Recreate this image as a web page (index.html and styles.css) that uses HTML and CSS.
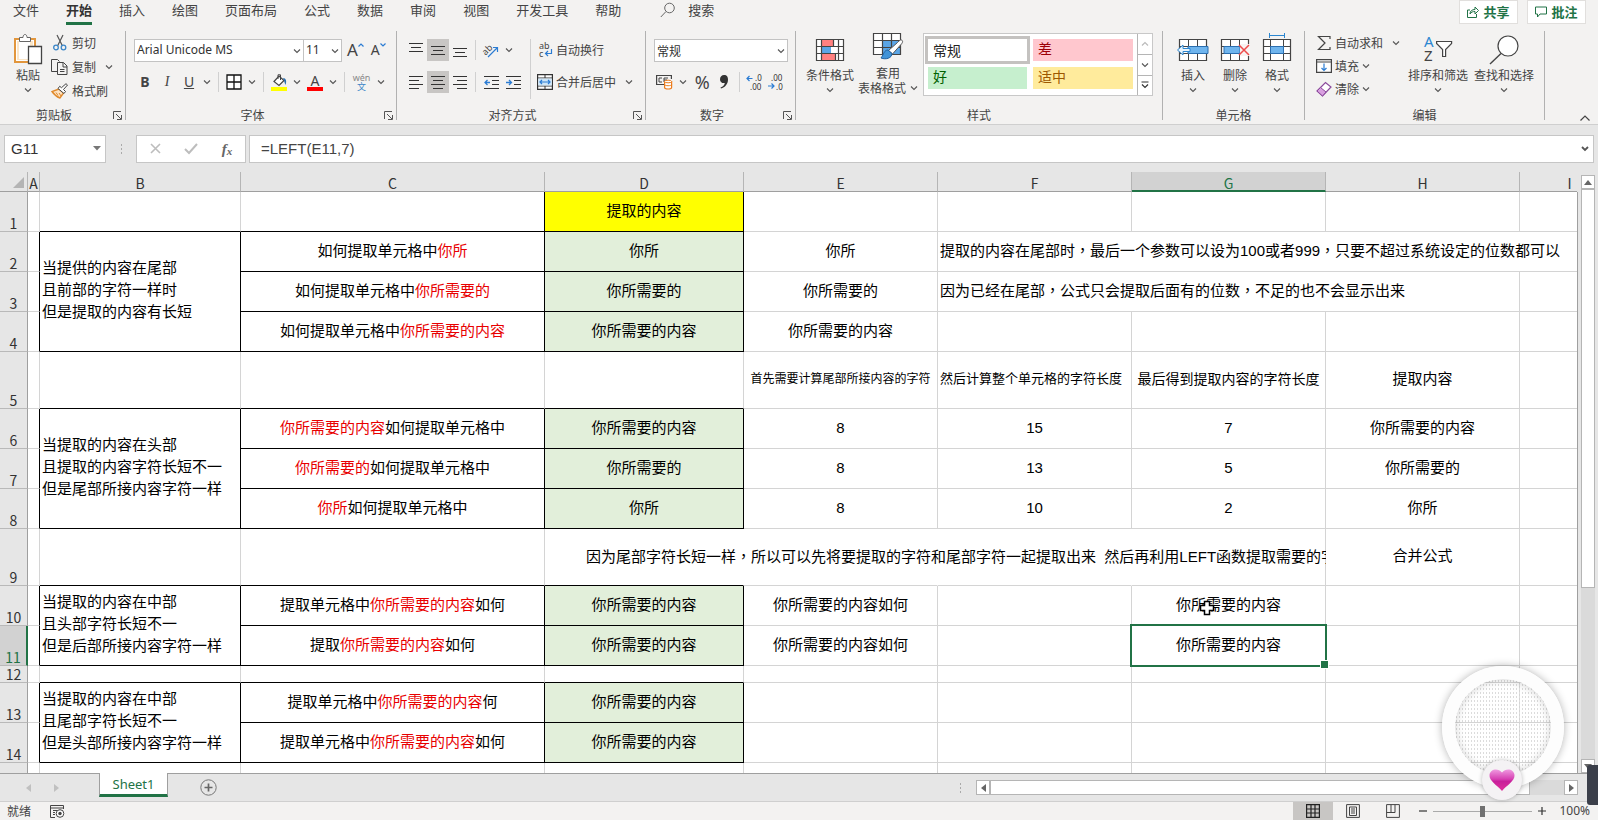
FILE: index.html
```
<!DOCTYPE html>
<html lang="zh-CN">
<head>
<meta charset="utf-8">
<title>Sheet1</title>
<link rel="stylesheet" href="styles.css">
</head>
<body>
<svg class="defs" aria-hidden="true">
  <symbol id="chev" viewBox="0 0 8 8"><path d="M1 2.500 4 5.500 7 2.500" fill="none" stroke="#555" stroke-width="1.100"/></symbol>
  <symbol id="launch" viewBox="0 0 9 9"><path d="M.5 8V.5H8M3 3l5 5M8.500 4v4.500H4" fill="none" stroke="#555"/></symbol>
</svg>
<div class="app">
  <header class="tabs">
    <nav class="tab-list">
      <button>文件</button><button class="active">开始</button><button>插入</button><button>绘图</button><button>页面布局</button><button>公式</button><button>数据</button><button>审阅</button><button>视图</button><button>开发工具</button><button>帮助</button>
      <button class="search"><svg width="16" height="16" viewBox="0 0 16 16"><circle cx="9.500" cy="6" r="4.800" fill="none" stroke="#666"/><path d="M6 9.500.8 15" stroke="#666"/></svg>搜索</button>
    </nav>
    <div class="share">
      <button><svg width="12" height="12" viewBox="0 0 12 12"><path d="M3 4H.5v7.500h9V8M3 8c0-3 2-4.500 5-4.500V1l3.500 3.500L8 8V5.500C6 5.500 4 6 3 8z" fill="none" stroke="#217346"/></svg>共享</button>
      <button><svg width="12" height="12" viewBox="0 0 12 12"><path d="M.5 1h11v7H5l-2.500 3V8h-2z" fill="none" stroke="#217346"/></svg>批注</button>
    </div>
  </header>

  <section class="ribbon">
    <div class="group">
      <div class="body clip">
        <button class="big tight">
          <svg width="28" height="32" viewBox="0 0 28 32"><path d="M1 6h20v23H1z" fill="#fff" stroke="#e2963c" stroke-width="2"/><path d="M3 8h16v19H3z" fill="#fbe6c8"/><path d="M5 8h11v18H5z" fill="#fff"/><path d="M5.500 8.500v-4H9c0-4 4-4 4 0h3.500v4z" fill="#fff" stroke="#666"/><path d="M14.500 13.500h13v17h-13z" fill="#fff" stroke="#444" stroke-width="1.300"/></svg>
          <span>粘贴</span><svg class="chev"><use href="#chev"/></svg>
        </button>
        <div class="stack clip-stack">
          <button><svg width="18" height="16" viewBox="0 0 18 16"><path d="M6 0l5.500 11M12 0 6.500 11" stroke="#555" stroke-width="1.200" fill="none"/><circle cx="5" cy="12.500" r="2.300" fill="none" stroke="#3b86c8" stroke-width="1.300"/><circle cx="12.500" cy="12.500" r="2.300" fill="none" stroke="#3b86c8" stroke-width="1.300"/></svg>剪切</button>
          <button><svg width="18" height="16" viewBox="0 0 18 16"><path d="M6 12.500H.5V.5h6l2 2M6.500 3.500h6l3.500 3.500v8.500H6.500zM12 3.500V8h4M9 10.500h4.500M9 12.500h4.500" fill="none" stroke="#444"/></svg>复制<svg class="chev far"><use href="#chev"/></svg></button>
          <button><svg width="18" height="16" viewBox="0 0 18 16"><path d="M8 6 1 8.500c2 3 4 5 8 6.500l3.500-5z" fill="#fde3c4" stroke="#e08a2c" stroke-width="1.400"/><path d="M7 5.500l6 5 1.500-2-2-2L16.500 2 15 .7l-4.500 4-1.800-1.400z" fill="#fff" stroke="#444"/><path d="M5 9.500l2 3M8 10l2 3" stroke="#e08a2c"/></svg>格式刷</button>
        </div>
      </div>
      <footer class="dialog">剪贴板<svg class="launch"><use href="#launch"/></svg></footer>
    </div>

    <div class="group">
      <div class="body fontg">
        <div class="row">
          <label class="pick font-name"><select aria-label="字体"><option>Arial Unicode MS</option></select><svg class="chev"><use href="#chev"/></svg></label><label class="pick font-size"><select aria-label="字号"><option>11</option></select><svg class="chev"><use href="#chev"/></svg></label>
          <button class="grow" aria-label="增大字号"><span class="a1">A</span><svg width="6" height="4" viewBox="0 0 6 4"><path d="M.5 3.500 3 1l2.500 2.500" fill="none" stroke="#2b7cd3" stroke-width="1.200"/></svg></button>
          <button class="grow" aria-label="减小字号"><span class="a2">A</span><svg width="6" height="4" viewBox="0 0 6 4"><path d="M.5.5 3 3 5.500.5" fill="none" stroke="#2b7cd3" stroke-width="1.200"/></svg></button>
        </div>
        <div class="row">
          <button class="t"><b>B</b></button><button class="t"><i>I</i></button><button class="t"><u>U</u></button><button class="c" aria-label="下划线选项"><svg class="chev"><use href="#chev"/></svg></button>
          <span class="vs"></span>
          <button class="t" aria-label="边框"><svg width="16" height="16" viewBox="0 0 16 16"><path d="M1 1h14v14H1zM8 1v14M1 8h14" fill="#fff" stroke="#111" stroke-width="1.300"/></svg></button><button class="c" aria-label="边框选项"><svg class="chev"><use href="#chev"/></svg></button>
          <span class="vs"></span>
          <button class="t" aria-label="填充颜色"><svg width="17" height="17" viewBox="0 0 17 17"><path d="M3 7.500 8 2l5 4.500-5 5z" fill="#fff" stroke="#444" stroke-width="1.200"/><path d="M7 5V.8h2.500V6" fill="none" stroke="#444"/><path d="M12 4c3 0 4 3 2.500 7-1-2-1-4-2.500-7z" fill="#2b6fb0"/><path d="M0 13h16v4H0z" fill="#ff0"/></svg></button><button class="c" aria-label="填充颜色选项"><svg class="chev"><use href="#chev"/></svg></button>
          <button class="t tint" aria-label="字体颜色"><span>A</span></button><button class="c" aria-label="字体颜色选项"><svg class="chev"><use href="#chev"/></svg></button>
          <span class="vs"></span>
          <button class="t wen"><span>wén</span><em>文</em></button><button class="c" aria-label="拼音选项"><svg class="chev"><use href="#chev"/></svg></button>
        </div>
      </div>
      <footer class="dialog">字体<svg class="launch"><use href="#launch"/></svg></footer>
    </div>

    <div class="group">
      <div class="body alig">
        <div class="rows">
          <div class="row">
            <button class="t" aria-label="顶端对齐"><svg width="14" height="14" viewBox="0 0 14 14"><path d="M0 .5h14M2 4.500h10M0 8.500h14" stroke="#333"/></svg></button><button class="t on" aria-label="垂直居中"><svg width="14" height="14" viewBox="0 0 14 14"><path d="M0 3.500h14M2 7.500h10M0 11.500h14" stroke="#333"/></svg></button><button class="t" aria-label="底端对齐"><svg width="14" height="14" viewBox="0 0 14 14"><path d="M0 5.500h14M2 9.500h10M0 13.500h14" stroke="#333"/></svg></button>
            <span class="vs"></span>
            <button class="t" aria-label="方向"><svg width="18" height="16" viewBox="0 0 18 16"><text x="0" y="11" transform="rotate(-45 5 8)" class="ab">ab</text><path d="M6 15 15 6M11 5.500h4.500V10" fill="none" stroke="#2b7cd3" stroke-width="1.200"/></svg></button><button class="c" aria-label="方向选项"><svg class="chev"><use href="#chev"/></svg></button>
          </div>
          <div class="row">
            <button class="t" aria-label="左对齐"><svg width="14" height="14" viewBox="0 0 14 14"><path d="M0 1.500h14M0 5.500h10M0 9.500h14M0 13.500h10" stroke="#333"/></svg></button><button class="t on" aria-label="居中"><svg width="14" height="14" viewBox="0 0 14 14"><path d="M0 1.500h14M2 5.500h10M0 9.500h14M2 13.500h10" stroke="#333"/></svg></button><button class="t" aria-label="右对齐"><svg width="14" height="14" viewBox="0 0 14 14"><path d="M0 1.500h14M4 5.500h10M0 9.500h14M4 13.500h10" stroke="#333"/></svg></button>
            <span class="vs"></span>
            <button class="t" aria-label="减少缩进"><svg width="15" height="14" viewBox="0 0 15 14"><path d="M0 1.500h15M8 5.500h7M8 9.500h7M0 13.500h15" stroke="#333"/><path d="M6 7.500H1M3.500 5 1 7.500 3.500 10" fill="none" stroke="#2b7cd3" stroke-width="1.300"/></svg></button><button class="t" aria-label="增加缩进"><svg width="15" height="14" viewBox="0 0 15 14"><path d="M0 1.500h15M8 5.500h7M8 9.500h7M0 13.500h15" stroke="#333"/><path d="M0 7.500h5.500M3 5l2.500 2.500L3 10" fill="none" stroke="#2b7cd3" stroke-width="1.300"/></svg></button>
          </div>
        </div>
        <span class="vs tall"></span>
        <div class="rows wrapcol">
          <button class="ic"><svg width="16" height="16" viewBox="0 0 16 16"><text x="2" y="7" class="ab">ab</text><text x="2" y="15" class="ab">c</text><path d="M14.500 7v4.500H9M11 9l-2.500 2.500L11 14" fill="none" stroke="#2b7cd3" stroke-width="1.200"/></svg>自动换行</button>
          <button class="ic"><svg width="16" height="16" viewBox="0 0 16 16"><path d="M.6.6h14.800v14.800H.6z" fill="#fff" stroke="#333" stroke-width="1.200"/><path d="M.6 4h14.800M.6 12h14.800M8 .6V4M8 12v3" stroke="#333"/><path d="M1.200 4.500h13.600v7H1.200z" fill="#cfe6f7"/><path d="M3 8h10M5 6 3 8l2 2M11 6l2 2-2 2" fill="none" stroke="#2b7cd3" stroke-width="1.200"/></svg>合并后居中<svg class="chev far"><use href="#chev"/></svg></button>
        </div>
      </div>
      <footer class="dialog">对齐方式<svg class="launch"><use href="#launch"/></svg></footer>
    </div>

    <div class="group">
      <div class="body numg">
        <label class="pick"><select aria-label="数字格式"><option>常规</option></select><svg class="chev"><use href="#chev"/></svg></label>
        <div class="row">
          <button class="t" aria-label="会计数字格式"><svg width="17" height="16" viewBox="0 0 17 16"><path d="M8 10.500H.6v-9h14.800V5" fill="none" stroke="#444" stroke-width="1.200"/><path d="M6 4H3v4h3M8 8V4h4M8 6h3" fill="none" stroke="#444"/><path d="M8.600 7.500v6c0 2 7 2 7 0v-6z" fill="#fff" stroke="#ec7c1c" stroke-width="1.200"/><ellipse cx="12.100" cy="7.500" rx="3.500" ry="1.300" fill="#fff" stroke="#ec7c1c"/><path d="M8.600 10.500c0 1.600 7 1.600 7 0" fill="none" stroke="#ec7c1c"/></svg></button><button class="c" aria-label="会计格式选项"><svg class="chev"><use href="#chev"/></svg></button>
          <button class="t pct">%</button>
          <button class="t" aria-label="千位分隔"><svg width="10" height="14" viewBox="0 0 10 14"><path d="M5 0c3 0 4 2 4 4.500C9 9 6 12.500 2 13.500l-.5-1C4 11.500 5.500 10 5.800 8 3 8.500 1 7 1 4.200 1 2 2.800 0 5 0z" fill="#333"/></svg></button>
          <span class="vs"></span>
          <button class="t" aria-label="增加小数位数"><svg width="18" height="18" viewBox="0 0 18 18"><path d="M6.500 5.500H1M3.500 3 1 5.500 3.500 8" fill="none" stroke="#2b7cd3" stroke-width="1.200"/><text x="9" y="8" class="dg">.0</text><text x="4" y="17" class="dg">.00</text></svg></button><button class="t" aria-label="减少小数位数"><svg width="18" height="18" viewBox="0 0 18 18"><path d="M1 13h6M4.500 10.500 7 13l-2.500 2.500" fill="none" stroke="#2b7cd3" stroke-width="1.200"/><text x="4" y="8" class="dg">.00</text><text x="9" y="17" class="dg">.0</text></svg></button>
        </div>
      </div>
      <footer class="dialog">数字<svg class="launch"><use href="#launch"/></svg></footer>
    </div>

    <div class="group">
      <div class="body styg">
        <button class="big w56"><svg width="30" height="24" viewBox="0 0 30 24"><path d="M1.500 1.500h27v21h-27z" fill="#fff"/><path d="M7 2h12v6H7zM7 15h14v7H7z" fill="#ff8080"/><path d="M7 8h9v7H7z" fill="#5aa5e6"/><path d="M1.500 1.500h27v21h-27zM1.500 8.500h27M1.500 15.500h27M6.500 1.500v21M18.500 1.500v7M23.500 1.500v21M20.500 15.500v7" fill="none" stroke="#444" stroke-width="1.200"/></svg><span>条件格式</span><svg class="chev"><use href="#chev"/></svg></button>
        <button class="big w60"><svg width="32" height="28" viewBox="0 0 32 28"><path d="M1.500 1.500h27v21h-27z" fill="#fff"/><path d="M10 8h18v14H10z" fill="#5aa5e6"/><path d="M1.500 1.500h27v21h-27zM1.500 8.500h27M1.500 15.500h27M10.500 1.500v21M19.500 1.500v21" fill="none" stroke="#444" stroke-width="1.200"/><path d="M29.500 8c2 1 1 3-1 5l-8 9-4-3.500 9-8c2-2 3-3 4-2.500z" fill="#fff" stroke="#555"/><path d="M16 18c-4 0-4 4-7 8 5 2 11 0 11-4.500z" fill="#4093d8" stroke="#2060a0"/></svg><span>套用</span><span class="line">表格格式<svg class="chev"><use href="#chev"/></svg></span></button>
        <div class="gallery">
          <div class="swatches">
            <button class="sw normal">常规</button><button class="sw bad">差</button><button class="sw good">好</button><button class="sw mid">适中</button>
          </div>
          <div class="spin"><button disabled aria-label="上一行"><svg class="chev up"><use href="#chev"/></svg></button><button aria-label="下一行"><svg class="chev"><use href="#chev"/></svg></button><button aria-label="其他"><svg width="8" height="8" viewBox="0 0 8 8"><path d="M.5 1h7M1 3.500l3 3 3-3" fill="none" stroke="#333" stroke-width="1.200"/></svg></button></div>
        </div>
      </div>
      <footer>样式</footer>
    </div>

    <div class="group">
      <div class="body cellg">
        <button class="big"><svg width="32" height="26" viewBox="0 0 32 26"><path d="M2.500 3.500h27v21h-27z" fill="#fff" stroke="#444" stroke-width="1.200"/><path d="M2.500 10.500h27M2.500 17.500h27M11.500 3.500v21M20.500 3.500v21" stroke="#444"/><path d="M11 10.500h20v7H11z" fill="#6fb5ee" stroke="#2b6fb0"/><path d="M13 12.500H6V9l-5.500 5L6 19v-3.500h7z" fill="#e8f4fd" stroke="#2b86d0"/></svg><span>插入</span><svg class="chev"><use href="#chev"/></svg></button>
        <button class="big"><svg width="32" height="26" viewBox="0 0 32 26"><path d="M2.500 3.500h27v21h-27z" fill="#fff" stroke="#444" stroke-width="1.200" /><path d="M2.500 10.500h27M2.500 17.500h27M11.500 3.500v21M20.500 3.500v21" stroke="#444"/><path d="M5 10.500h16v7H5z" fill="#6fb5ee" stroke="#2b6fb0"/><path d="M21 8h10v12H21z" fill="#f8f3f2"/><path d="M20 9l10 10M30 9 20 19" stroke="#ee4b4b" stroke-width="1.500"/></svg><span>删除</span><svg class="chev"><use href="#chev"/></svg></button>
        <button class="big"><svg width="32" height="29" viewBox="0 0 32 29"><path d="M2.500 6.500h27v21h-27z" fill="#fff" stroke="#444" stroke-width="1.200"/><path d="M2.500 13.500h27M2.500 20.500h27M9.500 6.500v21M22.500 6.500v21" stroke="#444"/><path d="M9.500 13.500h13v7h-13z" fill="#6fb5ee" stroke="#2b6fb0"/><path d="M8.500 2.500h15M8.500 0v5M23.500 0v5" stroke="#2b86d0"/></svg><span>格式</span><svg class="chev"><use href="#chev"/></svg></button>
      </div>
      <footer>单元格</footer>
    </div>

    <div class="group">
      <div class="body editg">
        <div class="stack edit-stack">
          <button><svg width="16" height="16" viewBox="0 0 16 16"><path d="M14 4V1.500H2.500L9 8l-6.500 6.500H14V12" fill="none" stroke="#444" stroke-width="1.200"/></svg>自动求和<svg class="chev far"><use href="#chev"/></svg></button>
          <button><svg width="16" height="16" viewBox="0 0 16 16"><path d="M.6 1.600h14.800v12.800H.6zM.6 4h14.800" fill="#fff" stroke="#444" stroke-width="1.200"/><path d="M8 5.500v7M5.500 10 8 12.500 10.500 10" fill="none" stroke="#2b7cd3" stroke-width="1.200"/></svg>填充<svg class="chev"><use href="#chev"/></svg></button>
          <button><svg width="16" height="16" viewBox="0 0 16 16"><path d="M1 10 9.500 1.500 15 6l-8.500 9z" fill="#fff" stroke="#8b4a9c" stroke-width="1.200"/><path d="M1 10 4.500 6.500 10 11l-3.500 4z" fill="#d9a0e0" stroke="#8b4a9c"/></svg>清除<svg class="chev"><use href="#chev"/></svg></button>
        </div>
        <button class="big w66"><svg width="32" height="28" viewBox="0 0 32 28"><text x="2" y="13" class="az blue">A</text><text x="2" y="27" class="az">Z</text><path d="M14.600 7.500h15v2l-6 6v7h-3v-7l-6-6z" fill="#fff" stroke="#444" stroke-width="1.200"/></svg><span>排序和筛选</span><svg class="chev"><use href="#chev"/></svg></button>
        <button class="big w66 tight"><svg width="30" height="30" viewBox="0 0 30 30"><circle cx="19" cy="11" r="10" fill="#fff" stroke="#444" stroke-width="1.200"/><path d="M12 18.500 1 29" stroke="#444" stroke-width="1.400"/></svg><span>查找和选择</span><svg class="chev"><use href="#chev"/></svg></button>
      </div>
      <footer>编辑</footer>
    </div>
    <button class="collapse" aria-label="折叠功能区"><svg width="10" height="6" viewBox="0 0 10 6"><path d="M.5 5.500 5 1l4.500 4.500" fill="none" stroke="#444" stroke-width="1.200"/></svg></button>
  </section>

  <section class="fbar">
    <label class="namebox"><input value="G11" aria-label="名称框"><svg width="8" height="5" viewBox="0 0 8 5"><path d="M0 0h8L4 4.500z" fill="#777"/></svg></label>
    <span class="dots"></span>
    <div class="fx">
      <button aria-label="取消"><svg width="11" height="11" viewBox="0 0 11 11"><path d="M1 1l9 9M10 1l-9 9" stroke="#bdbdbd" stroke-width="1.600"/></svg></button>
      <button aria-label="输入"><svg width="14" height="11" viewBox="0 0 14 11"><path d="M1 6l4 4 8-9" fill="none" stroke="#bdbdbd" stroke-width="2"/></svg></button>
      <button class="fn">f<sub>x</sub></button>
    </div>
    <label class="formula"><input value="=LEFT(E11,7)" aria-label="编辑栏"><svg width="8" height="6" viewBox="0 0 8 6"><path d="M1 1l3 3 3-3" fill="none" stroke="#555" stroke-width="1.800"/></svg></label>
  </section>

  <main class="sheet">
    <div class="grid">
      <table>
        <colgroup><col class="c0"><col class="ca"><col class="cb"><col class="cc"><col class="cd"><col class="ce"><col class="ce"><col class="ce"><col class="ce"><col></colgroup>
        <thead><tr><th class="corner"><svg width="11" height="11" viewBox="0 0 11 11"><path d="M11 0v11H0z" fill="#b4b4b4"/></svg></th><th>A</th><th>B</th><th>C</th><th>D</th><th>E</th><th>F</th><th class="sel">G</th><th>H</th><th>I</th></tr></thead>
        <tbody>
          <tr><th>1</th><td></td><td class="kb"></td><td class="kb kr"></td><td class="kb kr yellow">提取的内容</td><td></td><td></td><td></td><td></td><td></td></tr>
          <tr><th>2</th><td class="kr"></td><td rowspan="3" class="kb kr note">当提供的内容在尾部<br>且前部的字符一样时<br>但是提取的内容有长短</td><td class="kb kr">如何提取单元格中<mark>你所</mark></td><td class="kb kr green">你所</td><td>你所</td><td colspan="4" class="left">提取的内容在尾部时<span lang="zh-TW" class="cm">，</span>最后一个参数可以设为100或者999<span lang="zh-TW" class="cm">，</span>只要不超过系统设定的位数都可以</td></tr>
          <tr><th>3</th><td class="kr"></td><td class="kb kr">如何提取单元格中<mark>你所需要的</mark></td><td class="kb kr green">你所需要的</td><td>你所需要的</td><td colspan="3" class="left">因为已经在尾部<span lang="zh-TW" class="cm">，</span>公式只会提取后面有的位数<span lang="zh-TW" class="cm">，</span>不足的也不会显示出来</td><td></td></tr>
          <tr><th>4</th><td class="kr"></td><td class="kb kr">如何提取单元格中<mark>你所需要的内容</mark></td><td class="kb kr green">你所需要的内容</td><td>你所需要的内容</td><td></td><td></td><td></td><td></td></tr>
          <tr class="high"><th>5</th><td></td><td class="kb"></td><td class="kb"></td><td class="kb"></td><td class="s12">首先需要计算尾部所接内容的字符</td><td class="s13 left">然后计算整个单元格的字符长度</td><td class="s14">最后得到提取内容的字符长度</td><td>提取内容</td><td></td></tr>
          <tr><th>6</th><td class="kr"></td><td rowspan="3" class="kb kr note">当提取的内容在头部<br>且提取的内容字符长短不一<br>但是尾部所接内容字符一样</td><td class="kb kr"><mark>你所需要的内容</mark>如何提取单元格中</td><td class="kb kr green">你所需要的内容</td><td>8</td><td>15</td><td>7</td><td>你所需要的内容</td><td></td></tr>
          <tr><th>7</th><td class="kr"></td><td class="kb kr"><mark>你所需要的</mark>如何提取单元格中</td><td class="kb kr green">你所需要的</td><td>8</td><td>13</td><td>5</td><td>你所需要的</td><td></td></tr>
          <tr><th>8</th><td class="kr"></td><td class="kb kr"><mark>你所</mark>如何提取单元格中</td><td class="kb kr green">你所</td><td>8</td><td>10</td><td>2</td><td>你所</td><td></td></tr>
          <tr class="high"><th>9</th><td></td><td class="kb"></td><td class="kb"></td><td class="kb nr spill"><span class="long">因为尾部字符长短一样<span lang="zh-TW" class="cm">，</span>所以可以先将要提取的字符和尾部字符一起提取出来&nbsp; 然后再利用LEFT函数提取需要的字</span></td><td class="nr"></td><td class="nr"></td><td></td><td>合并公式</td><td></td></tr>
          <tr><th>10</th><td class="kr"></td><td rowspan="2" class="kb kr note">当提取的内容在中部<br>且头部字符长短不一<br>但是后部所接内容字符一样</td><td class="kb kr">提取单元格中<mark>你所需要的内容</mark>如何</td><td class="kb kr green">你所需要的内容</td><td>你所需要的内容如何</td><td></td><td class="hover">你所需要的内容<svg class="cursor" width="16" height="16" viewBox="0 0 16 16"><path d="M5.500 1.500h5v4h4v5h-4v4h-5v-4h-4v-5h4z" fill="#fff" stroke="#000" stroke-width="1.500"/></svg></td><td></td><td></td></tr>
          <tr><th class="sel">11</th><td class="kr"></td><td class="kb kr">提取<mark>你所需要的内容</mark>如何</td><td class="kb kr green">你所需要的内容</td><td>你所需要的内容如何</td><td></td><td class="current">你所需要的内容</td><td></td><td></td></tr>
          <tr class="low"><th>12</th><td></td><td class="kb"></td><td class="kb"></td><td class="kb"></td><td></td><td></td><td></td><td></td><td></td></tr>
          <tr><th>13</th><td class="kr"></td><td rowspan="2" class="kb kr note">当提取的内容在中部<br>且尾部字符长短不一<br>但是头部所接内容字符一样</td><td class="kb kr">提取单元格中<mark>你所需要的内容</mark>何</td><td class="kb kr green">你所需要的内容</td><td></td><td></td><td></td><td></td><td></td></tr>
          <tr><th>14</th><td class="kr"></td><td class="kb kr">提取单元格中<mark>你所需要的内容</mark>如何</td><td class="kb kr green">你所需要的内容</td><td></td><td></td><td></td><td></td><td></td></tr>
          <tr><th></th><td></td><td></td><td></td><td></td><td></td><td></td><td></td><td></td><td></td></tr>
        </tbody>
      </table>
    </div>
    <div class="vscroll">
      <button aria-label="向上滚动"><svg width="8" height="5" viewBox="0 0 8 5"><path d="M0 5h8L4 0z" fill="#666"/></svg></button>
      <div class="vtrack"><div class="vthumb"></div></div>
      <button aria-label="向下滚动"><svg width="8" height="5" viewBox="0 0 8 5"><path d="M0 0h8L4 5z" fill="#666"/></svg></button>
    </div>
  </main>

  <section class="sheetbar">
    <button class="nav" aria-label="上一张"><svg width="5" height="8" viewBox="0 0 5 8"><path d="M5 0v8L0 4z" fill="#c0c0c0"/></svg></button>
    <button class="nav" aria-label="下一张"><svg width="5" height="8" viewBox="0 0 5 8"><path d="M0 0v8l5-4z" fill="#c0c0c0"/></svg></button>
    <button class="tab">Sheet1</button>
    <button class="add" aria-label="新工作表"><svg width="17" height="17" viewBox="0 0 17 17"><circle cx="8.500" cy="8.500" r="7.700" fill="none" stroke="#777"/><path d="M8.500 4.500v8M4.500 8.500h8" stroke="#666" stroke-width="1.700"/></svg></button>
    <span class="dots"></span>
    <div class="hscroll">
      <button aria-label="向左滚动"><svg width="5" height="8" viewBox="0 0 5 8"><path d="M5 0v8L0 4z" fill="#666"/></svg></button>
      <div class="htrack"><div class="hthumb"></div></div>
      <button aria-label="向右滚动"><svg width="5" height="8" viewBox="0 0 5 8"><path d="M0 0v8l5-4z" fill="#666"/></svg></button>
    </div>
  </section>

  <footer class="status">
    <span>就绪</span>
    <svg class="macro" width="15" height="13" viewBox="0 0 15 13"><path d="M5 12.500H.5V.5h13V4M.5 3h13M3 5.500h4M3 7.500h2M3 9.500h2" fill="none" stroke="#444"/><circle cx="10" cy="8.500" r="3.800" fill="#fff" stroke="#444"/><circle cx="10" cy="8.500" r="1.700" fill="#444"/></svg>
    <div class="views">
      <button class="on" aria-label="普通"><svg width="14" height="14" viewBox="0 0 14 14"><path d="M.6.6h12.800v12.800H.6zM.6 5h12.800M.6 9h12.800M5 .6v12.800M9 .6v12.800" fill="none" stroke="#222" stroke-width="1.200"/></svg></button>
      <button aria-label="页面布局"><svg width="14" height="14" viewBox="0 0 14 14"><path d="M.6.6h12.800v12.800H.6zM3.500 3h7v8.500h-7zM5 5h4M5 7h4M5 9h4" fill="none" stroke="#444"/></svg></button>
      <button aria-label="分页预览"><svg width="14" height="14" viewBox="0 0 14 14"><path d="M.6.6h12.800v12.800H.6zM5 .6v8M9 .6v8M.6 8.500H9" fill="none" stroke="#444"/></svg></button>
    </div>
    <button class="pm" aria-label="缩小"><svg width="8" height="8" viewBox="0 0 8 8"><path d="M0 4h8" stroke="#333" stroke-width="1.200"/></svg></button>
    <input class="zoom" type="range" min="0" max="100" value="50" aria-label="缩放">
    <button class="pm" aria-label="放大"><svg width="8" height="8" viewBox="0 0 8 8"><path d="M0 4h8M4 0v8" stroke="#333" stroke-width="1.200"/></svg></button>
    <button class="pctz">100%</button>
  </footer>

  <div class="dock"></div>
  <div class="widget">
    <div class="ring"></div>
    <div class="heart"><svg width="26" height="22" viewBox="0 0 26 22"><defs><linearGradient id="hg" x1="0" y1="0" x2="0" y2="1"><stop offset="0" stop-color="#ef9ae0"/><stop offset=".45" stop-color="#d63fb2"/><stop offset=".55" stop-color="#c8209a"/><stop offset="1" stop-color="#e02f9c"/></linearGradient></defs><path d="M13 22C8 16 0 12 .5 6 1 0 9-1.500 13 3.500 17-1.500 25 0 25.500 6 26 12 18 16 13 22z" fill="url(#hg)"/></svg></div>
  </div>
</div>
</body>
</html>
```
FILE: styles.css
```
* { box-sizing: border-box; }
body {
  margin: 0;
  font-family: "Noto Sans CJK SC", sans-serif;
  font-size: 12px;
  line-height: 16px;
  color: #444;
  background: #e6e6e6;
}
button, input, select { font: inherit; color: inherit; background: none; border: 0; padding: 0; margin: 0; }
button { display: flex; align-items: center; justify-content: center; white-space: nowrap; }
svg { display: block; flex: none; overflow: visible; }
.defs { position: absolute; width: 0; height: 0; }
.chev { width: 8px; height: 8px; }
.up { transform: scaleY(-1); opacity: .4; }
.app { position: relative; display: flex; flex-direction: column; height: 100vh; overflow: hidden; }

/* tab strip */
.tabs { display: flex; justify-content: space-between; height: 31px; padding: 0 12px 0 13px; background: #f3f2f1; font-size: 13px; }
.tab-list { display: flex; gap: 27px; align-items: flex-start; }
.tab-list button { height: 25px; padding-bottom: 2px; border-bottom: 3px solid transparent; }
.tab-list .active { font-weight: bold; color: #333; border-color: #217346; }
.tab-list .search { gap: 12px; margin-left: 12px; }
.share { display: flex; gap: 9px; }
.share button { gap: 4px; width: 59px; height: 24px; background: #fff; border: 1px solid #e1dfdd; color: #217346; font-weight: bold; }

/* ribbon */
.ribbon { position: relative; display: flex; height: 94px; background: #f3f2f1; border-bottom: 1px solid #cfcfcf; }
.group { display: flex; flex-direction: column; height: 89px; border-right: 1px solid #b1b1b1; }
.group footer { position: relative; text-align: center; line-height: 10px; }
.group .dialog { padding-right: 17px; }
.launch { position: absolute; right: 3px; bottom: 0; width: 9px; height: 9px; }
.body { display: flex; flex: none; height: 79px; }
.row { display: flex; align-items: center; height: 22px; }
.t { width: 22px; height: 22px; }
.c { width: 14px; height: 22px; }
.on { background: #c8c6c4; }
.vs { width: 1px; height: 20px; margin: 0 4px; background: #d0d0d0; }
.big { flex-direction: column; justify-content: flex-end; height: 64px; width: 42px; }
.big span { line-height: 15px; margin-top: 5px; }
.tight span { margin-top: 2px; }
.big .line { display: flex; align-items: center; gap: 4px; margin-top: 0; }
.big .line .chev { margin: 0; }
.big .chev { margin: 4px 0 1px; }
.w56 { width: 56px; }
.w60 { width: 60px; }
.w66 { width: 66px; }
.stack { display: flex; flex-direction: column; align-items: flex-start; }
.stack button { height: 24px; gap: 3px; }
.stack .far { margin-left: 6px; }
.clip { padding-left: 7px; width: 125px; gap: 2px; }
.clip-stack { width: 72px; }
.fontg { flex-direction: column; gap: 10px; padding: 8px 8px; width: 270px; }
.pick { position: relative; display: block; height: 23px; background: #fff; border: 1px solid #c3c3c3; }
.pick select { appearance: none; width: 100%; height: 21px; padding-left: 2px; color: #333; }
.pick .chev { position: absolute; right: 2px; top: 7px; pointer-events: none; }
.font-name { width: 172px; font-family: "Noto Sans", sans-serif; }
.font-size { width: 40px; margin-left: -1px; font-family: "Noto Sans", sans-serif; }
.grow { align-items: flex-start; width: 20px; height: 20px; margin-left: 3px; font-family: "Noto Sans", sans-serif; }
.grow svg { margin-top: 3px; }
.a1 { font-size: 17px; line-height: 20px; }
.a2 { font-size: 14px; line-height: 20px; }
.fontg .t { font-family: "Noto Sans", sans-serif; font-size: 14px; }
.fontg i { font-family: "Liberation Serif", serif; }
.fontg .tint span { width: 16px; height: 17px; line-height: 14px; border-bottom: 4px solid #f00; }
.fontg .wen { flex-direction: column; width: 25px; font-size: 9px; line-height: 8px; color: #888; }
.wen em { font-style: normal; color: #3b86c8; line-height: 9px; }
.alig { padding: 8px 8px 0; width: 248px; }
.rows { display: flex; flex-direction: column; gap: 10px; }
.tall { height: 60px; margin: 0 6px; }
.wrapcol { gap: 10px; align-items: flex-start; }
.ic { height: 22px; gap: 3px; }
.ic .far { margin-left: 6px; }
.ab { font: 9px "Noto Sans", sans-serif; fill: #444; }
.dg { font: 8px "Noto Sans", sans-serif; fill: #333; }
.az { font: 15px "Noto Sans", sans-serif; fill: #444; }
.blue { fill: #2b86d0; }
.numg { flex-direction: column; gap: 9px; padding: 8px 8px 0; width: 149px; }
.numg .pick { width: 134px; }
.pct { font-family: "Noto Sans", sans-serif; font-size: 18px; margin-left: 2px; }
.styg { width: 366px; padding-left: 6px; }
.gallery { display: flex; margin: 2px 0 0 5px; width: 230px; height: 63px; background: #fff; border: 1px solid #c8c8c8; }
.swatches { flex: 1; display: grid; grid-template: 28px 28px / 105px 106px; padding: 2px 0 0 1px; }
.sw { justify-content: flex-start; align-items: flex-start; margin: 3px 3px; padding-left: 5px; font-size: 14px; line-height: 18px; }
.normal { margin: 0; border: 3px solid #c4c2c0; color: #222; line-height: 22px; }
.bad { background: #ffc7ce; color: #9c0006; }
.good { background: #c6efce; color: #006100; }
.mid { background: #ffeb9c; color: #9c5700; }
.spin { display: grid; grid-template-rows: 1fr 1fr 1fr; width: 15px; border-left: 1px solid #b5b5b5; }
.spin button + button { border-top: 1px solid #b5b5b5; }
.cellg { width: 141px; padding-left: 9px; }
.editg { width: 239px; padding-left: 11px; }
.edit-stack { width: 89px; }
.edit-stack button { height: 23px; }
.collapse { position: absolute; right: 8px; bottom: 3px; }

/* formula bar */
.fbar { display: flex; align-items: center; height: 47px; padding: 0 4px; font-family: "Liberation Sans", sans-serif; font-size: 15px; }
.namebox, .fx, .formula { display: flex; align-items: center; height: 28px; background: #fff; border: 1px solid #c6c6c6; }
.namebox { width: 102px; padding: 0 6px; }
.namebox input { width: 82px; color: #333; }
.dots { width: 3px; height: 11px; background: radial-gradient(circle at center, #aaa 1px, transparent 1px) 0 0 / 3px 4px; }
.fbar .dots { margin: 0 13px 0 14px; }
.fx { width: 110px; margin-right: 3px; }
.fx button { flex: 1; }
.fx .fn { font-family: "Liberation Serif", serif; font-style: italic; font-weight: bold; color: #666; }
.fn sub { font-size: 11px; line-height: 11px; align-self: flex-end; }
.formula { flex: 1; padding: 0 4px 0 11px; }
.formula input { flex: 1; }

/* grid */
.sheet { display: flex; flex: 1; min-height: 0; }
.grid { flex: 1; min-width: 0; overflow: hidden; }
table { table-layout: fixed; width: calc(100% + 43px); border-collapse: separate; border-spacing: 0; }
.c0 { width: 28px; }
.ca { width: 12px; }
.cb { width: 201px; }
.cc { width: 304px; }
.cd { width: 199px; }
.ce { width: 194px; }
th { padding: 0; font-size: 14px; font-weight: normal; line-height: 16px; color: #333; background: #e6e6e6; }
thead th { height: 20px; border-right: 1px solid #b5b5b5; border-bottom: 1px solid #9f9f9f; line-height: 15px; vertical-align: bottom; }
thead .sel { background: #d2d2d2; border-bottom: 2px solid #217346; color: #217346; line-height: 14px; }
.corner svg { margin: 0 3px 3px auto; }
tbody th { vertical-align: bottom; border-right: 1px solid #9f9f9f; border-bottom: 1px solid #b9b9b9; }
tbody .sel { background: #d2d2d2; border-right: 2px solid #217346; color: #217346; }
tbody tr { height: 40px; }
td {
  padding: 0 0 2px;
  font-family: "Liberation Sans", "Noto Sans CJK SC", sans-serif;
  font-size: 15px;
  line-height: 16px;
  color: #000;
  text-align: center;
  white-space: nowrap;
  background: #fff;
  border-right: 1px solid #d4d4d4;
  border-bottom: 1px solid #d4d4d4;
}
tbody tr.high { height: 57px; }
tbody tr.low, tbody tr.low th { height: 17px; }
.low td { padding: 0; }
.kb { border-bottom-color: #000; }
.kr { border-right-color: #000; }
.nr { border-right-color: #fff; }
.yellow { background: #ff0; }
.green { background: #e2efda; }
.note { text-align: left; padding-left: 2px; padding-bottom: 3px; line-height: 22px; }
.left { text-align: left; padding-left: 2px; }
.s12 { font-size: 12px; }
.s13 { font-size: 13px; }
.s14 { font-size: 14px; }
mark { background: none; color: #e80000; }
.cm { font-family: "Noto Sans CJK TC", sans-serif; line-height: 1; }
.hover, .current { position: relative; }
.spill { position: relative; z-index: 1; text-align: left; }
.long { position: absolute; left: 41px; top: 17px; width: 740px; line-height: 22px; overflow: hidden; }
.cursor { position: absolute; left: 67px; top: 14px; }
.current::before { content: ""; position: absolute; inset: -2px; border: 2px solid #217346; }
.current::after { content: ""; position: absolute; right: -4px; bottom: -4px; width: 7px; height: 7px; background: #217346; border: 1px solid #fff; }

/* scroll bars */
.vscroll { position: relative; display: flex; flex-direction: column; width: 21px; padding: 3px 3px 0 4px; }
.vscroll::before { content: ""; position: absolute; left: 0; top: 20px; bottom: 0; width: 1px; background: #9f9f9f; }
.vscroll button, .hscroll button { width: 14px; height: 14px; background: #fff; border: 1px solid #b5b5b5; }
.vtrack { flex: 1; background: #dadada; }
.vthumb { height: 70%; background: #fff; border: 1px solid #b5b5b5; }
.sheetbar { display: flex; align-items: center; height: 28px; padding-right: 20px; border-top: 1px solid #9f9f9f; }
.nav { width: 28px; }
.nav:first-child { margin-left: 14px; }
.tab { align-self: flex-start; width: 69px; height: 24px; margin: -1px 32px 0 29px; background: #fff; border: 1px solid #9f9f9f; border-width: 0 1px 3px; border-bottom-color: #217346; color: #217346; font-family: "Noto Sans", sans-serif; font-size: 13px; }
.sheetbar .dots { margin-left: auto; margin-right: 14px; }
.hscroll { display: flex; width: 602px; height: 15px; }
.hscroll button { height: 15px; }
.htrack { flex: 1; background: #dadada; }
.hthumb { width: 94%; height: 15px; background: #fff; border: 1px solid #b5b5b5; }

/* status bar */
.status { display: flex; align-items: center; height: 19px; padding: 0 8px 0 7px; background: #f3f2f1; border-top: 1px solid #cfcfcf; }
.macro { margin-left: 19px; }
.views { display: flex; margin-left: auto; }
.views button { width: 40px; height: 18px; }
.pm { width: 20px; height: 18px; }
.zoom { appearance: none; width: 99px; height: 11px; background: linear-gradient(#aaa, #aaa) center / 100% 1px no-repeat; }
.zoom::-webkit-slider-thumb { appearance: none; width: 5px; height: 11px; background: #707070; }
.pctz { width: 38px; justify-content: flex-end; font-family: "Noto Sans", sans-serif; }

/* floating recorder */
.dock { position: absolute; right: 0; bottom: 15px; width: 11px; height: 40px; background: #3b3f4a; border-radius: 3px 0 0 3px; }
.widget { position: absolute; right: 34px; bottom: 20px; width: 122px; height: 134px; }
.ring {
  width: 122px;
  height: 122px;
  border: 13px solid #fdfdfd;
  border-radius: 50%;
  background: radial-gradient(circle, #dcdcdc 1px, transparent 1px) 0 0 / 3px 4px;
  box-shadow: 0 0 9px rgba(0, 0, 0, .3), inset 0 0 8px rgba(0, 0, 0, .2);
}
.heart { position: absolute; left: 40px; bottom: 0; display: flex; align-items: center; justify-content: center; width: 40px; height: 40px; border-radius: 50%; background: #f4f2f4; box-shadow: 0 0 4px rgba(0, 0, 0, .25); }
```
